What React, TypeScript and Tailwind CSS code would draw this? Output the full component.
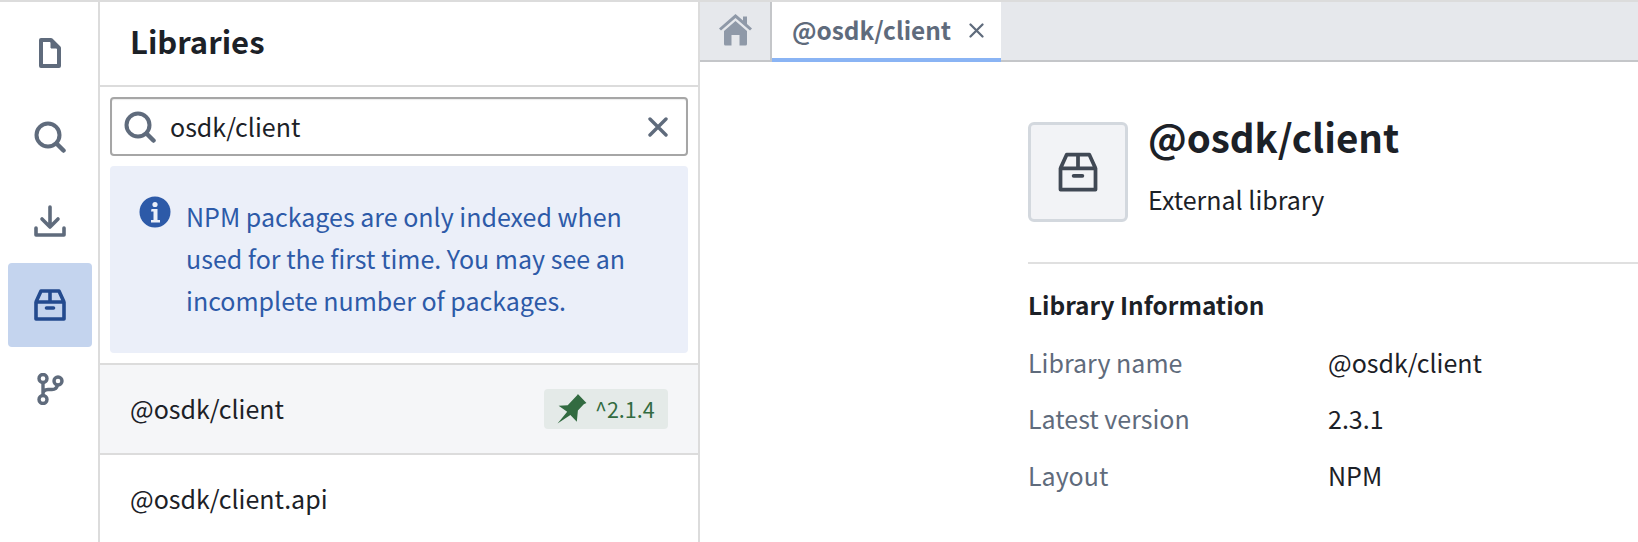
import React from "react";

function Doc({ className = "" }: { className?: string }) {
  return (
    <svg width="24" height="32" viewBox="0 0 24 32" className={className} fill="none">
      <path d="M3 3h10l8 8v18H3z" fill="none" stroke="currentColor" strokeWidth="4" strokeLinejoin="round" />
      <path d="M13 3v8h8" fill="currentColor" stroke="currentColor" strokeWidth="1" />
    </svg>
  );
}

function Search({ className = "" }: { className?: string }) {
  return (
    <svg width="32" height="32" viewBox="0 0 32 32" className={className} fill="none" stroke="currentColor">
      <circle cx="14" cy="14" r="11.5" strokeWidth="4" />
      <path d="M22.5 22.5 L29.5 29.5" strokeWidth="4.5" strokeLinecap="round" />
    </svg>
  );
}

function Download({ className = "" }: { className?: string }) {
  return (
    <svg width="32" height="32" viewBox="0 0 32 32" className={className} fill="none" stroke="currentColor" strokeWidth="3.6" strokeLinecap="round" strokeLinejoin="round">
      <path d="M16 2v20M8 14l8 8 8-8" />
      <path d="M2 23v7h28v-7" />
    </svg>
  );
}

function Box({ className = "", size = 32, sw = 3.6 }: { className?: string; size?: number; sw?: number }) {
  return (
    <svg width={size} height={size} viewBox="0 0 32 32" className={className} fill="none" stroke="currentColor" strokeWidth={sw} strokeLinejoin="round">
      <path d="M2 13h28v17H2zM2 13 7 2h18l5 11M16 2v11" />
      <path d="M12.5 19h7" strokeLinecap="round" />
    </svg>
  );
}

function Branch({ className = "" }: { className?: string }) {
  return (
    <svg width="28" height="32" viewBox="0 0 28 32" className={className} fill="none" stroke="currentColor" strokeWidth="3.4">
      <circle cx="7" cy="5.5" r="4" />
      <circle cx="7" cy="26.5" r="4" />
      <circle cx="22" cy="8" r="4" />
      <path d="M7 9.5v13M7 21c0-3 2-4.500 5-4.500h4c3 0 5-2 5.500-4.500" />
    </svg>
  );
}

function Pin() {
  return (
    <svg width="30" height="30" viewBox="0 0 28 28" fill="#326b41">
      <path d="M0.500 27.500 L9.500 16.500 L1.500 11 L10 10.500 L19 1 L19.500 0 L27.500 8.500 L25 9.500 L19.500 15.500 L18.500 26 L12.500 19.500 Z" />
    </svg>
  );
}

function Home() {
  return (
    <svg width="33" height="32" viewBox="0 0 33 32" fill="#8f99a8">
      <path d="M16.500 0 L24 6.500 V2.500 H28 V10 L33 14.500 L31 16.500 L16.500 4 L2 16.500 L0 14.500 Z" />
      <path d="M16.500 7 L28 17 V30 A1.500 1.500 0 0 1 26.500 31.500 H20.500 V21 H12.500 V31.500 H6.500 A1.500 1.500 0 0 1 5 30 V17 Z" />
    </svg>
  );
}

function X({ size, sw, className = "" }: { size: number; sw: number; className?: string }) {
  return (
    <svg width={size} height={size} viewBox="0 0 20 20" className={className} fill="none" stroke="currentColor" strokeWidth={sw} strokeLinecap="round">
      <path d="M2 2l16 16M18 2L2 18" />
    </svg>
  );
}

function Info() {
  return (
    <svg width="32" height="32" viewBox="0 0 32 32" className="shrink-0">
      <circle cx="16" cy="16" r="15.500" fill="#2d5aa8" />
      <path d="M12.500 13h6v11h2.500v2.500h-9V24h2.500v-8.500h-2.500z" fill="#ebeff9" />
      <circle cx="16" cy="8.500" r="2.600" fill="#ebeff9" />
    </svg>
  );
}

function Rail({ children, active }: { children: React.ReactNode; active?: boolean }) {
  return (
    <div className={`flex h-[84px] w-[84px] items-center justify-center rounded-[4px] ${active ? "bg-[#c4d4ee] text-[#234a8e]" : "text-[#5f6b7c]"}`}>
      {children}
    </div>
  );
}

function InfoRow({ label, value }: { label: string; value: string }) {
  return (
    <div className="flex h-[56.5px] items-center text-[25px]">
      <div className="w-[300px] text-[#5f6b7c]">{label}</div>
      <div className="text-[#1c2127]">{value}</div>
    </div>
  );
}

export default function App() {
  return (
    <div className="flex h-[542px] w-[1638px] overflow-hidden border-t-2 border-[#dcdcdc] bg-white text-[#1c2127]">
      <div className="flex h-full w-[100px] shrink-0 flex-col items-center border-r-2 border-[#dcdcdc] pl-[2px] pt-[9px] font-['Noto_Sans_CJK_SC',sans-serif]">
        <Rail><Doc /></Rail>
        <Rail><Search /></Rail>
        <Rail><Download /></Rail>
        <Rail active><Box /></Rail>
        <Rail><Branch /></Rail>
      </div>

      <div className="flex h-full w-[600px] shrink-0 flex-col border-r-2 border-[#dcdcdc] font-['Noto_Sans_CJK_SC',sans-serif]">
        <div className="flex h-[85px] shrink-0 items-center border-b-2 border-[#dcdcdc] pb-[4px] pl-[30px] text-[31px] font-semibold">
          Libraries
        </div>
        <div className="flex shrink-0 flex-col gap-[10px] px-[10px] pt-[10px]">
          <div className="flex h-[59px] items-center rounded-[4px] border-2 border-[#a6a6a6] pl-[12px] pr-[18px] shadow-[inset_0_1px_1px_rgba(0,0,0,0.08)]">
            <Search className="text-[#5f6b7c]" />
            <span className="ml-[14px] flex-1 text-[25px]">osdk/client</span>
            <X size={20} sw={3.4} className="text-[#5f6b7c]" />
          </div>
          <div className="flex h-[187px] gap-[15px] rounded-[4px] bg-[#ebeff9] pl-[29px] pr-[20px] pt-[30px] text-[25px] leading-[42px] text-[#2d5aa8]">
            <Info />
            <div className="-mt-[1px]">
              NPM packages are only indexed when used for the first time. You may see an incomplete number of packages.
            </div>
          </div>
        </div>
        <div className="mt-[10px] flex h-[92px] shrink-0 items-center justify-between border-y-2 border-[#dcdcdc] bg-[#f5f6f8] pl-[30px] pr-[30px] text-[25px]">
          <span>@osdk/client</span>
          <span className="flex h-[40px] w-[124px] items-center gap-[8px] rounded-[4px] bg-[#e4eae8] pl-[13px] text-[21.5px] text-[#326b41]">
            <Pin />
            ^2.1.4
          </span>
        </div>
        <div className="flex h-[88px] shrink-0 items-center pl-[30px] text-[25px]">@osdk/client.api</div>
      </div>

      <div className="flex h-full min-w-0 flex-1 flex-col font-['Noto_Sans_CJK_SC',sans-serif]">
        <div className="flex h-[60px] shrink-0 border-b-2 border-[#c4c6c9] bg-[#e6e8ec]">
          <div className="flex w-[72px] items-center justify-center border-r-2 border-[#c4c6c9] pb-[2px]">
            <Home />
          </div>
          <div className="-mb-[2px] flex w-[229px] items-center gap-[18px] border-b-[4px] border-[#8ab4f4] bg-white pl-[20px] text-[24.4px] font-semibold text-[#5f6b7c]">
            @osdk/client
            <X size={15} sw={3} />
          </div>
        </div>
        <div className="flex-1 pl-[328px] pt-[60px]">
          <div className="flex gap-[20px]">
            <div className="flex h-[100px] w-[100px] items-center justify-center rounded-[6px] border-[3px] border-[#d3d8de] bg-[#f2f3f6] text-[#404854]">
              <Box size={40} sw={3} />
            </div>
            <div>
              <div className="-mt-[8px] text-[38.5px] font-semibold leading-[44px]">@osdk/client</div>
              <div className="mt-[23px] text-[25px] leading-[36px]">External library</div>
            </div>
          </div>
          <div className="mt-[40px] h-[2px] bg-[#e0e0e0]" />
          <div className="mt-[23px] text-[24.4px] font-semibold leading-[36px]">Library Information</div>
          <div className="mt-[11px]">
            <InfoRow label="Library name" value="@osdk/client" />
            <InfoRow label="Latest version" value="2.3.1" />
            <InfoRow label="Layout" value="NPM" />
          </div>
        </div>
      </div>
    </div>
  );
}
